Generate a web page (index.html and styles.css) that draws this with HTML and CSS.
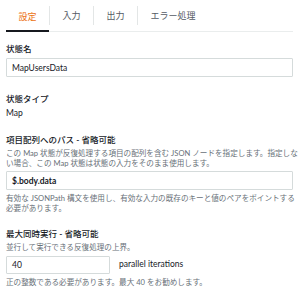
FILE: index.html
```html
<!DOCTYPE html>
<html lang="ja">
<head>
<meta charset="utf-8">
<link rel="stylesheet" href="styles.css">
</head>
<body>
<div class="panel">
  <nav class="tabs">
    <div class="tab active">設定</div>
    <span class="sep"></span>
    <div class="tab">入力</div>
    <span class="sep"></span>
    <div class="tab">出力</div>
    <span class="sep"></span>
    <div class="tab">エラー処理</div>
  </nav>

  <div class="field f-name">
    <div class="label">状態名</div>
    <div class="input">MapUsersData</div>
  </div>

  <div class="field f-type">
    <div class="label">状態タイプ</div>
    <div class="value">Map</div>
  </div>

  <div class="field f-path">
    <div class="label">項目配列へのパス - 省略可能</div>
    <div class="desc">この Map 状態が反復処理する項目の配列を含む JSON ノードを指定します。指定しな<br>い場合、この Map 状態は状態の入力をそのまま使用します。</div>
    <div class="input strong">$.body.data</div>
    <div class="desc after">有効な JSONPath 構文を使用し、有効な入力の既存のキーと値のペアをポイントする<br>必要があります。</div>
  </div>

  <div class="field f-conc">
    <div class="label">最大同時実行 - 省略可能</div>
    <div class="desc">並行して実行できる反復処理の上界。</div>
    <div class="row">
      <div class="input small">40</div>
      <span class="unit">parallel iterations</span>
    </div>
    <div class="desc after">正の整数である必要があります。最大 40 をお勧めします。</div>
  </div>
</div>
</body>
</html>
```

FILE: styles.css
```css
html, body {
  margin: 0;
  padding: 0;
  background: #ffffff;
}
body {
  font-family: "Lato", "Noto Sans CJK JP", sans-serif;
  color: #16191f;
}
.panel {
  padding: 0 7px 0 6px;
}
.tabs {
  display: flex;
  align-items: center;
  height: 31px;
  border-bottom: 1px solid #eaeded;
}
.tab {
  box-sizing: border-box;
  height: 31px;
  display: flex;
  align-items: center;
  padding: 0 12.5px;
  font-size: 9px;
  color: #545b64;
}
.tab.active {
  color: #ec7211;
  border-bottom: 2px solid #16191f;
  padding-top: 2px;
  height: 32px;
  margin-bottom: -1px;
}
.sep {
  width: 1px;
  height: 19px;
  background: #e3e6e6;
  margin-top: -1px;
}
.label {
  font-size: 8.5px;
  line-height: 12px;
  font-weight: 500;
  color: #16191f;
}
.value {
  font-size: 8.5px;
  line-height: 12px;
  margin-top: 2px;
  color: #16191f;
}
.desc {
  font-size: 7.6px;
  line-height: 10px;
  color: #687078;
  margin-top: 2px;
  white-space: nowrap;
}
.desc.after {
  margin-top: 3px;
}
.input {
  box-sizing: border-box;
  height: 19px;
  border: 1px solid #d5dbdb;
  border-radius: 1px;
  padding: 0 5px;
  display: flex;
  align-items: center;
  font-size: 8.5px;
  color: #16191f;
  margin-top: 3px;
}
.input.strong {
  font-weight: 700;
}
.row {
  display: flex;
  align-items: center;
  gap: 9px;
  margin-top: 4px;
}
.row .input {
  margin-top: 0;
}
.input.small {
  width: 104px;
  height: 18px;
}
.unit {
  font-size: 8.5px;
  color: #16191f;
  margin-top: -2px;
}
.f-name { margin-top: 11px; }
.f-type { margin-top: 16px; }
.f-path { margin-top: 15px; }
.f-conc { margin-top: 15px; }
```
